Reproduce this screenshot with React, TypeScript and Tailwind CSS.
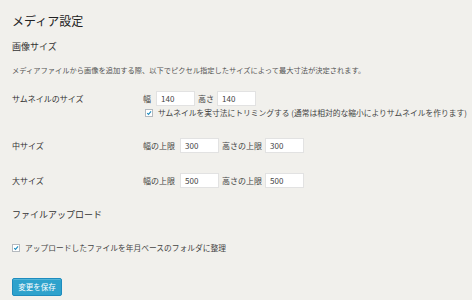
const font = { fontFamily: '"Noto Sans CJK JP", "Noto Sans", sans-serif' }

function Check() {
  return (
    <span className="flex h-[8px] w-[8px] shrink-0 items-center justify-center border border-[#b4b9be] bg-white">
      <svg viewBox="0 0 10 10" className="h-[8px] w-[8px]">
        <path d="M2 5.2 L4.2 7.4 L8.4 2.2" fill="none" stroke="#1e8cbe" strokeWidth="1.8" />
      </svg>
    </span>
  )
}

function NumBox({ value }: { value: string }) {
  return (
    <span className="flex h-[15px] w-[39px] items-center border border-[#e2e2e2] bg-white pl-[4px] text-[8px] text-[#444]">
      {value}
    </span>
  )
}

function SizeRow({ label, w, h, min }: { label: string; w: string; h: string; min?: boolean }) {
  return (
    <div className="flex h-[15px] items-center">
      <div className="w-[131px] text-[8px] text-[#333]">{label}</div>
      <div className="flex items-center text-[8px] text-[#444]">
        <span>{min ? "幅の上限" : "幅"}</span>
        <span className="ml-[5px]">
          <NumBox value={w} />
        </span>
        <span className="ml-[3px]">{min ? "高さの上限" : "高さ"}</span>
        <span className="ml-[3px]">
          <NumBox value={h} />
        </span>
      </div>
    </div>
  )
}

export default function App() {
  return (
    <div className="h-[300px] w-[472px] overflow-hidden bg-[#f1f0ec] pl-[12px] pt-[13px] text-[#444]" style={font}>
      <h1 className="text-[12px] leading-[16px] text-[#222]">メディア設定</h1>
      <h2 className="mt-[12px] text-[9px] leading-[12px] text-[#333]">画像サイズ</h2>
      <p className="mt-[12px] text-[7.25px] leading-[10px] text-[#555]">
        メディアファイルから画像を追加する際、以下でピクセル指定したサイズによって最大寸法が決定されます。
      </p>

      {/* Thumbnail */}
      <div className="mt-[16px]">
        <SizeRow label="サムネイルのサイズ" w="140" h="140" />
        <div className="ml-[133px] mt-[2px] flex h-[10px] items-center gap-[5px] text-[7.75px] leading-[10px] text-[#444]">
          <Check />
          <span>サムネイルを実寸法にトリミングする (通常は相対的な縮小によりサムネイルを作ります)</span>
        </div>
      </div>

      <div className="mt-[20px]">
        <SizeRow label="中サイズ" w="300" h="300" min />
      </div>
      <div className="mt-[20px]">
        <SizeRow label="大サイズ" w="500" h="500" min />
      </div>

      <h2 className="mt-[21px] text-[9px] leading-[12px] text-[#333]">ファイルアップロード</h2>

      <div className="mt-[22px] flex h-[10px] items-center gap-[5px] text-[7.75px] leading-[10px] text-[#444]">
        <Check />
        <span>アップロードしたファイルを年月ベースのフォルダに整理</span>
      </div>

      <button className="mt-[25px] flex h-[18px] w-[50px] items-center justify-center rounded-[2px] border border-[#1e8cbe] bg-[#2ea2cc] text-[7.5px] text-white shadow-[inset_0_1px_0_rgba(120,200,230,0.5)]">
        変更を保存
      </button>
    </div>
  )
}
